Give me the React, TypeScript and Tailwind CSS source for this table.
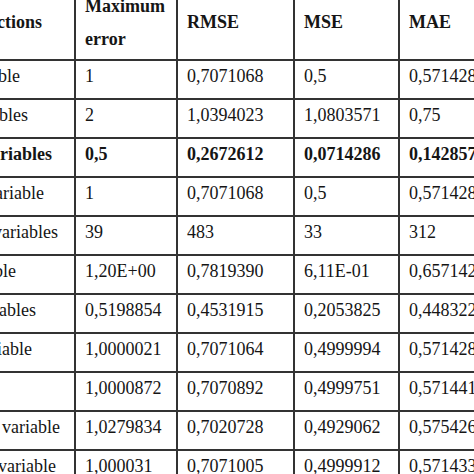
import React from "react";

type Row = {
  label: string;
  labelPad: string;
  values: string[];
  bold?: boolean;
};

const rows: Row[] = [
  { label: "Sphere 1 variable", labelPad: "pr-[54px]", values: ["1", "0,7071068", "0,5", "0,5714286"] },
  { label: "Sphere 2 variables", labelPad: "pr-[46px]", values: ["2", "1,0394023", "1,0803571", "0,75"] },
  { label: "Sphere 10 variables", labelPad: "pr-[22px]", values: ["0,5", "0,2672612", "0,0714286", "0,1428571"], bold: true },
  { label: "Booth 1 variable", labelPad: "pr-[30px]", values: ["1", "0,7071068", "0,5", "0,5714286"] },
  { label: "Booth 2 variables", labelPad: "pr-[16px]", values: ["39", "483", "33", "312"] },
  { label: "Matyas 1 variable", labelPad: "pr-[58px]", values: ["1,20E+00", "0,7819390", "6,11E-01", "0,6571429"] },
  { label: "Matyas 2 variables", labelPad: "pr-[38px]", values: ["0,5198854", "0,4531915", "0,2053825", "0,4483224"] },
  { label: "Easom 1 variable", labelPad: "pr-[42px]", values: ["1,0000021", "0,7071064", "0,4999994", "0,5714286"] },
  { label: "", labelPad: "pr-[40px]", values: ["1,0000872", "0,7070892", "0,4999751", "0,571441"] },
  { label: "Rastrigin 1 variable", labelPad: "pr-[14px]", values: ["1,0279834", "0,7020728", "0,4929062", "0,5754266"] },
  { label: "Ackley 1 variable", labelPad: "pr-[18px]", values: ["1,000031", "0,7071005", "0,4999912", "0,5714331"] },
];

const font = "font-['Liberation_Serif','Times_New_Roman',serif] text-[18px]";
const cell = `border-r-2 border-b-2 border-[#333] align-top pl-[9px] pt-[4px] leading-[22px] whitespace-nowrap ${font}`;
const headCell = `border-r-2 border-b-2 border-[#333] align-middle pl-[9px] leading-[33px] font-bold text-left ${font}`;

const App = () => {
  return (
    <div className={`w-[474px] h-[474px] overflow-hidden bg-white text-[#151515] ${font}`}>
      <table className={`table-fixed border-collapse mt-[-14px] w-[540px] ${font}`}>
        <colgroup>
          <col className="w-[75px]" />
          <col className="w-[102px]" />
          <col className="w-[117px]" />
          <col className="w-[105px]" />
          <col className="w-[141px]" />
        </colgroup>
        <thead>
          <tr className="h-[74px]">
            <th className={`border-r-2 border-b-2 border-[#333] align-middle p-0 font-bold leading-[33px] ${font}`}>
              <div className="flex justify-end overflow-hidden whitespace-nowrap pr-[32px]">
                <span>Test functions</span>
              </div>
            </th>
            <th className={headCell}>
              Maximum
              <br />
              error
            </th>
            <th className={headCell}>RMSE</th>
            <th className={headCell}>MSE</th>
            <th className={headCell}>MAE</th>
          </tr>
        </thead>
        <tbody>
          {rows.map((row, index) => (
            <tr key={index} className={`h-[39px] ${row.bold ? "font-bold" : ""}`}>
              <td className={`border-r-2 border-b-2 border-[#333] align-top p-0 pt-[4px] leading-[22px] ${font}`}>
                <div className={`flex justify-end overflow-hidden whitespace-nowrap ${row.labelPad}`}>
                  <span>{row.label}</span>
                </div>
              </td>
              {row.values.map((value, i) => (
                <td key={i} className={cell}>
                  {value}
                </td>
              ))}
            </tr>
          ))}
        </tbody>
      </table>
    </div>
  );
};

export default App;
